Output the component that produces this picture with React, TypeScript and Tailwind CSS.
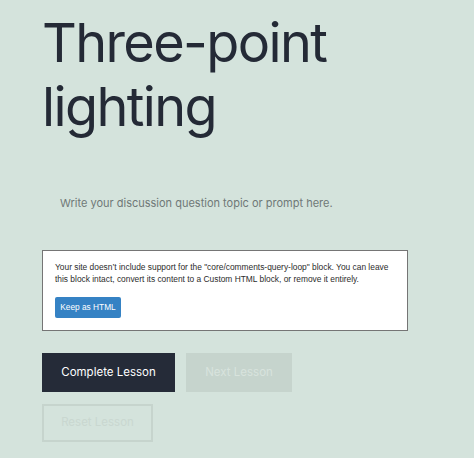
export default function App() {
  return (
    <div className="min-h-[458px] bg-[#d4e3dc] pl-[42px] pt-[11px] font-['Inter','Liberation_Sans',sans-serif]">
      {/* Lesson title */}
      <h1 className="text-[54px] leading-[64px] tracking-[-0.03em] text-[#242a36] font-normal">
        Three-point
        <br />
        lighting
      </h1>

      {/* Discussion prompt */}
      <p className="mt-[54px] pl-[18px] text-[11px] leading-[20px] text-[#6f7877]">
        Write your discussion question topic or prompt here.
      </p>

      {/* Missing block notice */}
      <div className="mt-[37px] w-[366px] border border-[#757575] bg-white pl-[12px] pr-[8px] pt-[11px] pb-[12px]">
        <p className="text-[8.4px] leading-[11.5px] text-[#2c2c2c] font-['Liberation_Sans',sans-serif]">
          Your site doesn’t include support for the "core/comments-query-loop" block. You can leave this block intact, convert its content to a Custom HTML block, or remove it entirely.
        </p>
        <button className="mt-[12px] h-[21px] w-[66px] rounded-[2px] bg-[#3582c4] text-white text-[8.3px] font-['Liberation_Sans',sans-serif]">
          Keep as HTML
        </button>
      </div>

      {/* Lesson actions */}
      <div className="mt-[22px] flex flex-wrap gap-x-[11px] gap-y-[12px] w-[260px]">
        <button className="h-[39px] w-[133px] bg-[#252b38] text-white text-[11.5px]">
          Complete Lesson
        </button>
        <button className="h-[39px] w-[106px] bg-[#c6d4cd] text-[#d8e3dd] text-[11.5px]">
          Next Lesson
        </button>
        <button className="h-[38px] w-[111px] border-2 border-[#c6d4cd] text-[#c9d7d0] text-[11.5px]">
          Reset Lesson
        </button>
      </div>
    </div>
  )
}
